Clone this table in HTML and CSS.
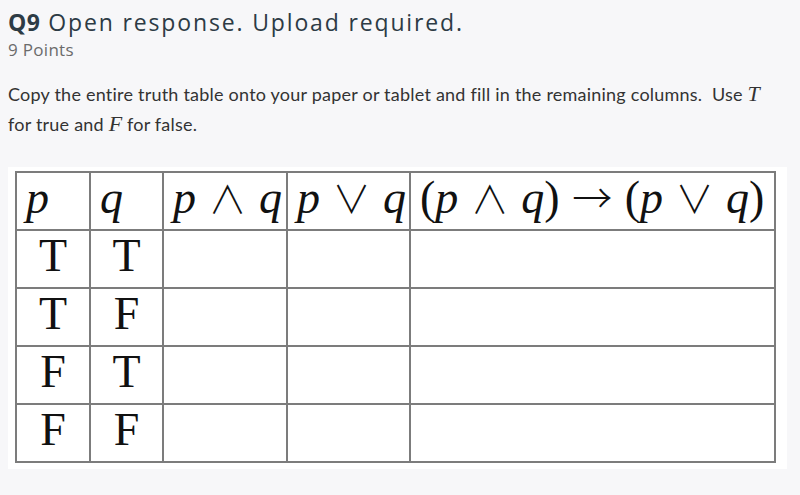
FILE: index.html
```html
<!DOCTYPE html>
<html>
<head>
<meta charset="utf-8">
<link rel="stylesheet" href="styles.css">
</head>
<body>
<div class="question">
  <h2 class="q-title"><span class="q-num">Q9</span> Open response. Upload required.</h2>
  <div class="q-points">9 Points</div>
  <p class="q-text">Copy the entire truth table onto your paper or tablet and fill in the remaining columns.&nbsp; Use <span class="m">T</span> for true and <span class="m">F</span> for false.</p>
  <div class="figure">
    <table class="truth">
      <colgroup>
        <col class="c1"><col class="c2"><col class="c3"><col class="c4"><col class="c5">
      </colgroup>
      <thead>
        <tr>
          <th><i>p</i></th>
          <th><i>q</i></th>
          <th><i>p</i> <span class="op">∧</span> <i>q</i></th>
          <th><i>p</i> <span class="op">∨</span> <i>q</i></th>
          <th>(<i>p</i> <span class="op">∧</span> <i>q</i>) <span class="op arrow">→</span> (<i>p</i> <span class="op">∨</span> <i>q</i>)</th>
        </tr>
      </thead>
      <tbody>
        <tr><td>T</td><td>T</td><td></td><td></td><td></td></tr>
        <tr><td>T</td><td>F</td><td></td><td></td><td></td></tr>
        <tr><td>F</td><td>T</td><td></td><td></td><td></td></tr>
        <tr><td>F</td><td>F</td><td></td><td></td><td></td></tr>
      </tbody>
    </table>
  </div>
</div>
</body>
</html>
```

FILE: styles.css
```css
html, body {
  margin: 0;
  background: #f7f7f9;
}
body {
  padding: 8px;
  font-family: "Open Sans", sans-serif;
  color: #2d3b45;
}
.q-title {
  margin: 0;
  font-family: "Open Sans", sans-serif;
  font-size: 23px;
  font-weight: 400;
  line-height: 28px;
  letter-spacing: 1.85px;
  color: #2d3b45;
}
.q-num {
  font-weight: 700;
  letter-spacing: 0.5px;
}
.q-points {
  margin-top: 3px;
  font-family: "Open Sans", sans-serif;
  font-size: 17px;
  line-height: 22px;
  letter-spacing: 0.3px;
  color: #6b6b6b;
}
.q-text {
  margin: 18px 0 0;
  max-width: 772px;
  font-family: Lato, sans-serif;
  font-size: 18px;
  line-height: 30px;
  letter-spacing: 0.22px;
  color: #333;
}
.m {
  font-family: "Liberation Serif", "DejaVu Serif", serif;
  font-style: italic;
  font-size: 22px;
  line-height: 20px;
  letter-spacing: 0;
}
.figure {
  margin-top: 28px;
  width: 779px;
  background: #fff;
  padding: 4px 0 6px 7px;
  box-sizing: border-box;
}
.truth {
  border-collapse: collapse;
  font-family: "Liberation Serif", "DejaVu Serif", serif;
  font-size: 46px;
  color: #111;
}
.c1 { width: 74px; }
.c2 { width: 73px; }
.c3 { width: 124px; }
.c4 { width: 123px; }
.c5 { width: 365px; }
.truth th, .truth td {
  border: 2px solid #7c7c7c;
  height: 58px;
  padding: 0;
  box-sizing: border-box;
  vertical-align: top;
  line-height: 50px;
}
.truth th {
  text-align: left;
  font-weight: 400;
  padding-left: 9px;
  white-space: nowrap;
}
.truth td {
  text-align: center;
}
.op {
  font-family: "Noto Sans CJK SC", sans-serif;
  font-weight: 300;
  font-size: 38px;
  line-height: 1;
  margin: 0 1px;
}
.arrow {
  font-size: 40px;
}
```
